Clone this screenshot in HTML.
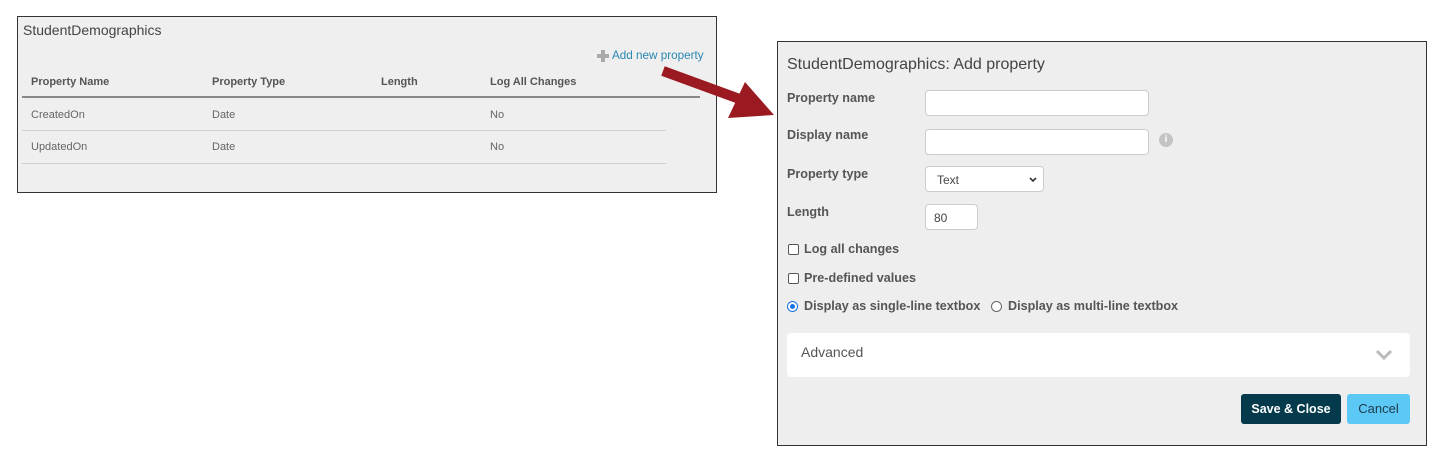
<!DOCTYPE html>
<html><head><meta charset="utf-8"><style>
*{box-sizing:border-box;margin:0;padding:0}
body{width:1440px;height:469px;background:#fff;position:relative;overflow:hidden;font-family:"Liberation Sans",sans-serif;color:#555}
.a{position:absolute;white-space:nowrap}
.p1{position:absolute;left:17px;top:16px;width:700px;height:177px;background:#efefef;border:1px solid #333}
.p2{position:absolute;left:777px;top:41px;width:650px;height:405px;background:#eeeeee;border:1px solid #333}
.h{font-size:11px;font-weight:bold;color:#555}
.c{font-size:11px;color:#666}
.lbl{font-size:12.6px;font-weight:bold;color:#555}
.inp{position:absolute;background:#fff;border:1px solid #ccc;border-radius:4px}
.cb{position:absolute;width:11px;height:11px;border:1px solid #555;border-radius:2px;background:#fff}
</style></head><body>
<div class="p1"></div>
<div class="a" style="left:23px;top:22px;font-size:14px;color:#444">StudentDemographics</div>
<div class="a" style="left:597px;top:50px;width:12px;height:12px">
 <div style="position:absolute;left:4px;top:0;width:4px;height:12px;background:#aaa"></div>
 <div style="position:absolute;left:0;top:4px;width:12px;height:4px;background:#aaa"></div></div>
<div class="a" style="left:612px;top:49px;font-size:11.7px;color:#2a87b0">Add new property</div>
<div class="a h" style="left:31px;top:76px">Property Name</div>
<div class="a h" style="left:212px;top:76px">Property Type</div>
<div class="a h" style="left:381px;top:76px">Length</div>
<div class="a h" style="left:490px;top:76px">Log All Changes</div>
<div class="a" style="left:22px;top:96px;width:678px;height:2px;background:#888"></div>
<div class="a c" style="left:31px;top:109px">CreatedOn</div>
<div class="a c" style="left:212px;top:109px">Date</div>
<div class="a c" style="left:490px;top:109px">No</div>
<div class="a" style="left:22px;top:130px;width:644px;height:1px;background:#d0d0d0"></div>
<div class="a c" style="left:31px;top:141px">UpdatedOn</div>
<div class="a c" style="left:212px;top:141px">Date</div>
<div class="a c" style="left:490px;top:141px">No</div>
<div class="a" style="left:22px;top:163px;width:644px;height:1px;background:#d0d0d0"></div>

<svg class="a" style="left:0;top:0" width="1440" height="469">
<line x1="663" y1="71" x2="745" y2="101" stroke="#9b1a22" stroke-width="10"/>
<polygon points="774,115 745,82 728,118" fill="#9b1a22"/>
</svg>

<div class="p2"></div>
<div class="a" style="left:787px;top:56px;font-size:16px;color:#444">StudentDemographics: Add property</div>
<div class="a lbl" style="left:787px;top:91px">Property name</div>
<div class="inp" style="left:925px;top:90px;width:224px;height:26px"></div>
<div class="a lbl" style="left:787px;top:128px">Display name</div>
<div class="inp" style="left:925px;top:129px;width:224px;height:26px"></div>
<div class="a" style="left:1159px;top:133px;width:14px;height:14px;border-radius:50%;background:#c4c4c4;color:#fff;font-size:10px;font-weight:bold;text-align:center;line-height:14px">i</div>
<div class="a lbl" style="left:787px;top:167px">Property type</div>
<div class="inp" style="left:925px;top:166px;width:119px;height:26px"><span class="a" style="left:11px;top:6px;font-size:12px;color:#444">Text</span><svg class="a" style="left:103px;top:10px" width="8" height="6"><polyline points="1,1 4,4 7,1" fill="none" stroke="#333" stroke-width="1.6"/></svg></div>
<div class="a lbl" style="left:787px;top:205px">Length</div>
<div class="inp" style="left:925px;top:204px;width:53px;height:26px"><span class="a" style="left:8px;top:6px;font-size:12px;color:#444">80</span></div>
<div class="cb" style="left:788px;top:244px"></div>
<div class="a lbl" style="left:804px;top:242px">Log all changes</div>
<div class="cb" style="left:788px;top:273px"></div>
<div class="a lbl" style="left:804px;top:271px">Pre-defined values</div>
<div class="a" style="left:787px;top:301px;width:11px;height:11px;border-radius:50%;border:1px solid #1a73e8;background:#fff"><div style="position:absolute;left:2px;top:2px;width:5px;height:5px;border-radius:50%;background:#1a73e8"></div></div>
<div class="a lbl" style="left:804px;top:299px">Display as single-line textbox</div>
<div class="a" style="left:991px;top:301px;width:11px;height:11px;border-radius:50%;border:1px solid #666;background:#fff"></div>
<div class="a lbl" style="left:1008px;top:299px">Display as multi-line textbox</div>
<div class="a" style="left:787px;top:333px;width:623px;height:44px;background:#fff;border-radius:4px"></div>
<div class="a" style="left:801px;top:344px;font-size:14px;color:#555">Advanced</div>
<svg class="a" style="left:1376px;top:350px" width="16" height="10"><polyline points="1,1 8,8 15,1" fill="none" stroke="#bbb" stroke-width="3"/></svg>
<div class="a" style="left:1241px;top:394px;width:100px;height:30px;background:#043a4c;border-radius:3px;color:#fff;font-size:12.5px;font-weight:bold;text-align:center;line-height:30px">Save &amp; Close</div>
<div class="a" style="left:1347px;top:394px;width:63px;height:30px;background:#5bc8f5;border-radius:3px;color:#1f3a4a;font-size:13px;text-align:center;line-height:30px">Cancel</div>
</body></html>
